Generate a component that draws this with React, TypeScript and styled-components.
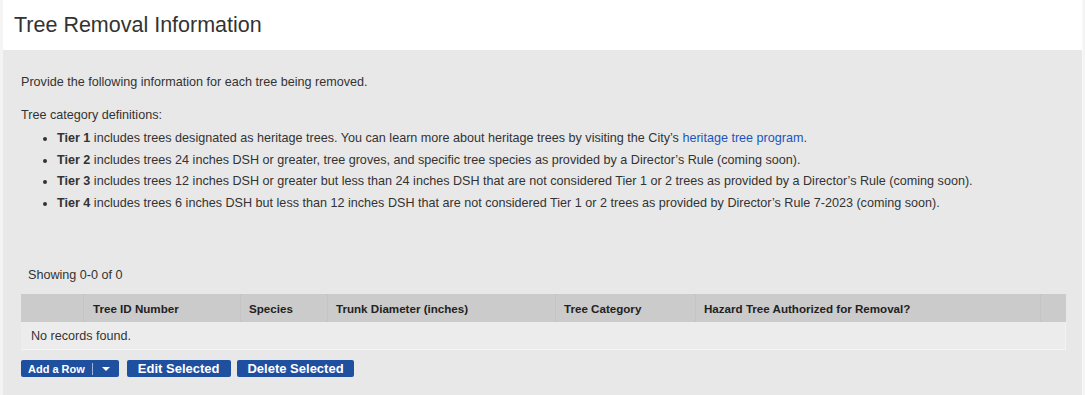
import React from "react";
import styled, { createGlobalStyle } from "styled-components";

const Global = createGlobalStyle`
  html, body { margin: 0; padding: 0; background: #f4f4f4; }
  body { font-family: "Liberation Sans", Arial, sans-serif; color: #333; }
`;

const Panel = styled.div`
  margin: 0 2px 0 3px;
  width: 1080px;
  height: 395px;
  background: #e8e8e8;
  border-right: 1px solid #f8f8f8;
  box-sizing: border-box;
`;

const Header = styled.div`
  background: #fff;
  height: 50px;
  padding: 0 11px;
  display: flex;
  align-items: center;
  box-sizing: border-box;
`;

const Title = styled.h1`
  margin: 0;
  font-size: 21.5px;
  font-weight: normal;
  color: #333;
`;

const Body = styled.div`
  padding: 25px 18px 0 18px;
  font-size: 12.6px;
`;

const Para = styled.p`
  margin: 0 0 19px 0;
  line-height: 14px;
`;

const List = styled.ul`
  margin: -13px 0 0 0;
  padding-left: 36px;
  line-height: 21.5px;
`;

const Item = styled.li``;

const Link = styled.a`
  color: #1a55c0;
  text-decoration: none;
`;

const Showing = styled.div`
  margin: 54px 0 0 7px;
  line-height: 14px;
`;

const Table = styled.div`
  margin-top: 12px;
  width: 1045px;
  font-size: 11.6px;
`;

const HeadRow = styled.div`
  display: grid;
  grid-template-columns: 62px 157px 87px 228px 140px 345px 1fr;
  height: 28px;
  background: #cbcbcb;
`;

const HeadCell = styled.div`
  display: flex;
  align-items: center;
  padding-left: 8px;
  font-weight: bold;
  color: #222;
  border-left: 1px solid #c4c4c4;
  &:first-child { border-left: none; }
  &:nth-child(2) { padding-left: 9px; }
`;

const EmptyRow = styled.div`
  height: 28px;
  display: flex;
  align-items: center;
  padding-left: 10px;
  background: #ececec;
  border-bottom: 1px solid #f4f4f4;
  border-right: 1px solid #f2f2f2;
  box-sizing: border-box;
  font-size: 12.6px;
`;

const Actions = styled.div`
  display: flex;
  gap: 7px;
  margin-top: 10px;
`;

const Button = styled.button<{ $small?: boolean }>`
  background: #1f4f9f;
  color: #fff;
  border: none;
  border-radius: 2px;
  height: 17px;
  padding: 0 11px;
  font-family: "Liberation Sans", Arial, sans-serif;
  font-weight: bold;
  font-size: ${(p) => (p.$small ? "11px" : "13px")};
  display: flex;
  align-items: center;
  cursor: pointer;
`;

const EditButton = styled(Button)`
  padding: 0 12px 0 11px;
  margin-left: 1px;
  margin-right: -1px;
`;

const DeleteButton = styled(Button)`
  padding: 0 10px;
`;

const SplitButton = styled(Button)`
  padding: 0 0 0 7px;
`;

const Divider = styled.span`
  width: 1px;
  height: 12px;
  background: #9fb4d8;
  margin-left: 7px;
`;

const Caret = styled.span`
  width: 0;
  height: 0;
  border-left: 4px solid transparent;
  border-right: 4px solid transparent;
  border-top: 4px solid #fff;
  margin: 0 9px 0 9px;
`;

export default function App() {
  return (
    <>
      <Global />
      <Panel>
        <Header>
          <Title>Tree Removal Information</Title>
        </Header>
        <Body>
          <Para>Provide the following information for each tree being removed.</Para>
          <Para>Tree category definitions:</Para>
          <List>
            <Item>
              <b>Tier 1</b> includes trees designated as heritage trees. You can learn more about heritage trees by visiting the City’s{" "}
              <Link href="#">heritage tree program</Link>.
            </Item>
            <Item>
              <b>Tier 2</b> includes trees 24 inches DSH or greater, tree groves, and specific tree species as provided by a Director’s Rule (coming soon).
            </Item>
            <Item>
              <b>Tier 3</b> includes trees 12 inches DSH or greater but less than 24 inches DSH that are not considered Tier 1 or 2 trees as provided by a Director’s Rule (coming soon).
            </Item>
            <Item>
              <b>Tier 4</b> includes trees 6 inches DSH but less than 12 inches DSH that are not considered Tier 1 or 2 trees as provided by Director’s Rule 7-2023 (coming soon).
            </Item>
          </List>
          <Showing>Showing 0-0 of 0</Showing>
          <Table>
            <HeadRow>
              <HeadCell />
              <HeadCell>Tree ID Number</HeadCell>
              <HeadCell>Species</HeadCell>
              <HeadCell>Trunk Diameter (inches)</HeadCell>
              <HeadCell>Tree Category</HeadCell>
              <HeadCell>Hazard Tree Authorized for Removal?</HeadCell>
              <HeadCell />
            </HeadRow>
            <EmptyRow>No records found.</EmptyRow>
          </Table>
          <Actions>
            <SplitButton $small>
              Add a Row
              <Divider />
              <Caret />
            </SplitButton>
            <EditButton>Edit Selected</EditButton>
            <DeleteButton>Delete Selected</DeleteButton>
          </Actions>
        </Body>
      </Panel>
    </>
  );
}
